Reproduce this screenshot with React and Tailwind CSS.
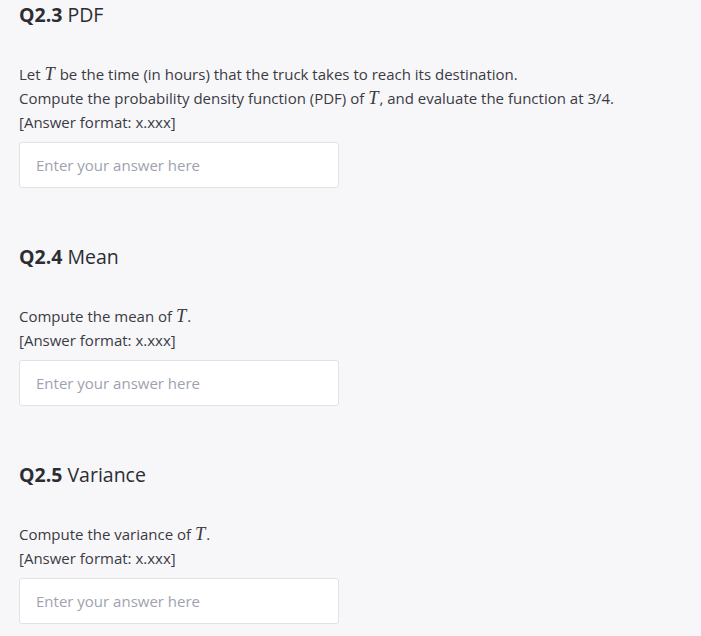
const Tvar = () => (
  <span className="italic text-[18.5px] leading-none mr-[1px]" style={{ fontFamily: '"Liberation Serif", serif' }}>T</span>
);

const questions = [
  {
    num: 'Q2.3',
    title: 'PDF',
    lines: [
      <>Let <Tvar /> be the time (in hours) that the truck takes to reach its destination.</>,
      <>Compute the probability density function (PDF) of <Tvar />, and evaluate the function at 3/4.</>,
    ],
  },
  {
    num: 'Q2.4',
    title: 'Mean',
    lines: [<>Compute the mean of <Tvar />.</>],
  },
  {
    num: 'Q2.5',
    title: 'Variance',
    lines: [<>Compute the variance of <Tvar />.</>],
  },
];

const Question = ({ q, first }) => (
  <div className={first ? '' : 'mt-[57px]'}>
    <h2 className="text-[19.5px] leading-[24px] text-[#2b2d33]">
      <span className="font-bold">{q.num}</span> {q.title}
    </h2>
    <div className="mt-[35px] text-[15px] leading-[24px] text-[#3a3b42]">
      {q.lines.map((line, i) => (
        <div key={i}>{line}</div>
      ))}
      <div>[Answer format: x.xxx]</div>
    </div>
    <input
      type="text"
      placeholder="Enter your answer here"
      className="mt-[8px] block w-[320px] h-[46px] bg-white border border-[#e1e1e8] rounded-[3px] px-[16px] text-[15px] text-[#3a3b42] placeholder:text-[#9ea2b0] focus:outline-none"
    />
  </div>
);

export default function App() {
  return (
    <div
      className="min-h-screen bg-[#f7f7fa] px-[19px] pt-[3px]"
      style={{ fontFamily: '"Open Sans", "Liberation Sans", sans-serif' }}
    >
      {questions.map((q, i) => (
        <Question key={q.num} q={q} first={i === 0} />
      ))}
    </div>
  );
}
